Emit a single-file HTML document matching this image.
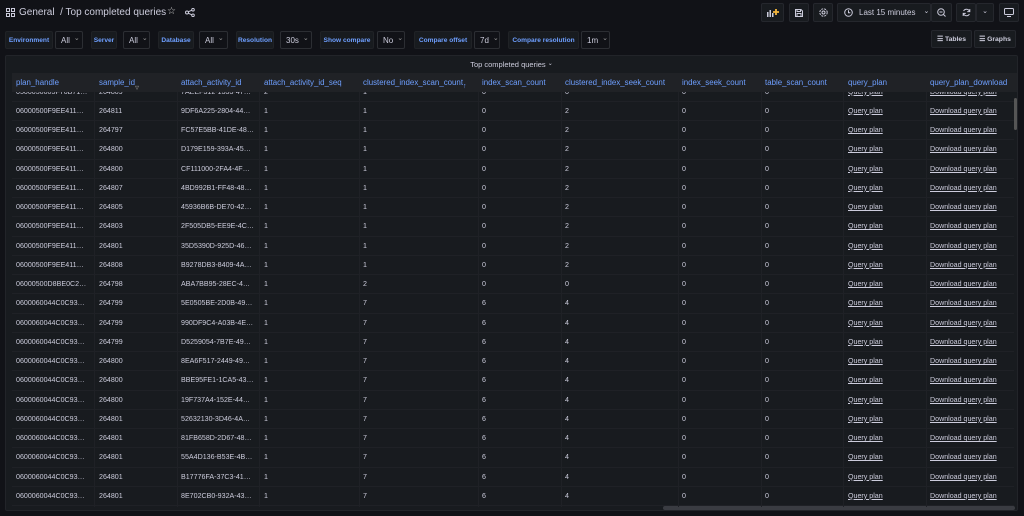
<!DOCTYPE html>
<html><head><meta charset="utf-8"><style>
*{box-sizing:border-box;margin:0;padding:0}
body{width:1024px;height:516px;background:#111217;font-family:"Liberation Sans",sans-serif;color:#ccccdc;position:relative;overflow:hidden;font-size:8px}
.a{position:absolute}
.btn{position:absolute;border:1px solid #25272d;background:#181b1f;border-radius:2px;height:19px;color:#ccccdc;font-size:8px;display:flex;align-items:center;justify-content:center;white-space:nowrap}
.lab{position:absolute;background:#181b1f;border:1px solid #202226;height:18px;color:#6e9fff;font-size:6.6px;font-weight:bold;display:flex;align-items:center;justify-content:center;border-radius:2px;white-space:nowrap}
.val{position:absolute;background:#111217;border:1px solid #2c2e33;height:18px;color:#ccccdc;font-size:8px;display:flex;align-items:center;padding-left:5px;border-radius:2px;white-space:nowrap}
.val:after{content:"⌄";font-size:7px;margin-left:4px;position:relative;top:-2px;color:#999}
.panel{position:absolute;left:5px;top:55px;width:1013px;height:456px;background:#181b1f;border:1px solid #222429;border-radius:2px;overflow:hidden}
.hdr{position:absolute;left:6px;top:17px;width:1005px;height:19px;background:#202226;z-index:2;color:#6e9fff;font-size:7.9px}
.hdr span{position:absolute;top:5px;white-space:nowrap}
.body{position:absolute;left:0;top:36px;width:1011px;height:415px;overflow:hidden}
.r{position:absolute;left:6px;width:1002px;height:19.25px;border-bottom:1px solid #1f2126;font-size:7.1px;color:#ccccdc}
.r span{position:absolute;top:5px;white-space:nowrap}
.r .u{text-decoration:underline;color:#ccccdc}
.vl{position:absolute;top:36px;width:1px;height:415px;background:#1f2126;z-index:3}
</style></head><body>
<div class="a" style="left:6px;top:8px;width:9px;height:9px;line-height:9px">
<svg width="9" height="9" viewBox="0 0 9 9"><g fill="none" stroke="#ccccdc" stroke-width="1"><rect x="0.5" y="0.5" width="3" height="3"/><rect x="5.5" y="0.5" width="3" height="3"/><rect x="0.5" y="5.5" width="3" height="3"/><rect x="5.5" y="5.5" width="3" height="3"/></g></svg></div>
<div class="a" style="left:19px;top:7px;font-size:10px;color:#ccccdc;white-space:nowrap">General&nbsp; / Top completed queries</div>
<div class="a" style="left:167px;top:6px;font-size:10px;color:#ccc">☆</div>
<svg class="a" style="left:185px;top:8px" width="10" height="9" viewBox="0 0 10 9"><g fill="none" stroke="#ccccdc"><circle cx="2" cy="4.5" r="1.5"/><circle cx="8" cy="1.7" r="1.3"/><circle cx="8" cy="7.3" r="1.3"/><path d="M3.3 3.8L6.8 2.2M3.3 5.2L6.8 6.8"/></g></svg>

<div class="btn" style="left:761px;top:3px;width:23px">
<svg width="12" height="9" viewBox="0 0 12 9"><g fill="#ccccdc"><rect x="0" y="4" width="1.5" height="5"/><rect x="2.5" y="2" width="1.5" height="7"/><rect x="5" y="5" width="1.5" height="4"/></g><path d="M9 1v6M6 4h6" stroke="#f5b73d" stroke-width="1.8"/></svg></div>
<div class="btn" style="left:789px;top:3px;width:20px"><svg width="8" height="8" viewBox="0 0 8 8"><path d="M0.5 0.5h5.5l1.5 1.5v5.5h-7z M2 0.5v2h3.5v-2 M2 7.5v-3h4v3" fill="none" stroke="#ccccdc"/></svg></div>
<div class="btn" style="left:813px;top:3px;width:20px"><svg width="9" height="9" viewBox="0 0 9 9"><circle cx="4.5" cy="4.5" r="3.7" fill="none" stroke="#ccccdc" stroke-dasharray="2 1"/><circle cx="4.5" cy="4.5" r="1.5" fill="none" stroke="#ccccdc"/></svg></div>
<div class="btn" style="left:837px;top:3px;width:94px;justify-content:flex-start;padding-left:6px"><svg width="9" height="9" viewBox="0 0 9 9"><circle cx="4.5" cy="4.5" r="3.8" fill="none" stroke="#ccccdc"/><path d="M4.5 2.2v2.5h1.8" fill="none" stroke="#ccccdc"/></svg><span style="margin-left:6px">Last 15 minutes</span><span style="margin-left:8px;font-size:7px;position:relative;top:-2px">⌄</span></div>
<div class="btn" style="left:931px;top:3px;width:21px"><svg width="9" height="9" viewBox="0 0 9 9"><circle cx="4" cy="4" r="3.3" fill="none" stroke="#ccccdc"/><path d="M2.5 4h3M6.5 6.5l2 2" stroke="#ccccdc"/></svg></div>
<div class="btn" style="left:956px;top:3px;width:20px"><svg width="9" height="9" viewBox="0 0 9 9"><path d="M7.5 3.5A3.2 3.2 0 0 0 1.6 3M1.5 5.5A3.2 3.2 0 0 0 7.4 6M7.8 1v2.6h-2.6M1.2 8v-2.6h2.6" fill="none" stroke="#ccccdc"/></svg></div>
<div class="btn" style="left:976px;top:3px;width:18px;font-size:7px"><span style="position:relative;top:-2px">⌄</span></div>
<div class="btn" style="left:999px;top:3px;width:20px"><svg width="10" height="9" viewBox="0 0 10 9"><rect x="0.5" y="0.5" width="9" height="6" rx="1" fill="none" stroke="#ccccdc"/><path d="M3 8.5h4" stroke="#ccccdc"/></svg></div>

<div class="lab" style="left:5px;top:31px;width:48px">Environment</div><div class="val" style="left:55px;top:31px;width:28px">All</div>
<div class="lab" style="left:91px;top:31px;width:26px">Server</div><div class="val" style="left:123px;top:31px;width:27px">All</div>
<div class="lab" style="left:158px;top:31px;width:36px">Database</div><div class="val" style="left:199px;top:31px;width:29px">All</div>
<div class="lab" style="left:236px;top:31px;width:38px">Resolution</div><div class="val" style="left:280px;top:31px;width:32px">30s</div>
<div class="lab" style="left:320px;top:31px;width:54px">Show compare</div><div class="val" style="left:377px;top:31px;width:28px">No</div>
<div class="lab" style="left:414px;top:31px;width:58px">Compare offset</div><div class="val" style="left:474px;top:31px;width:26px">7d</div>
<div class="lab" style="left:508px;top:31px;width:71px">Compare resolution</div><div class="val" style="left:581px;top:31px;width:29px">1m</div>
<div class="btn" style="left:931px;top:30px;width:41px;height:18px;font-size:6.8px;font-weight:bold">☰&nbsp;Tables</div>
<div class="btn" style="left:974px;top:30px;width:42px;height:18px;font-size:6.8px;font-weight:bold">☰&nbsp;Graphs</div>

<div class="panel">
<div class="a" style="left:0;top:4px;width:1011px;text-align:center;font-size:7.5px;color:#ccccdc">Top completed queries <span style="font-size:6px;position:relative;top:-2px">⌄</span></div>
<div class="hdr">
<span style="left:4px">plan_handle</span><span style="left:87px">sample_id <span style="color:#8e8e8e">▿</span></span><span style="left:169px">attach_activity_id</span><span style="left:252px">attach_activity_id_seq</span><span style="left:351px">clustered_index_scan_count <span style="font-size:7px">↑</span></span><span style="left:470px">index_scan_count</span><span style="left:553px">clustered_index_seek_count</span><span style="left:670px">index_seek_count</span><span style="left:753px">table_scan_count</span><span style="left:836px">query_plan</span><span style="left:918px">query_plan_download</span>
</div>
<div class="vl" style="left:88px"></div><div class="vl" style="left:171px"></div><div class="vl" style="left:253px"></div><div class="vl" style="left:353px"></div><div class="vl" style="left:472px"></div><div class="vl" style="left:555px"></div><div class="vl" style="left:672px"></div><div class="vl" style="left:755px"></div><div class="vl" style="left:837px"></div><div class="vl" style="left:920px"></div>
<div class="body" id="b"></div>
<div class="a" style="left:1008px;top:42px;width:3px;height:32px;background:#555;border-radius:2px"></div>
<div class="a" style="left:657px;top:450px;width:352px;height:4px;background:#3a3c42;border-radius:2px"></div>
</div>
<script>
var d=[["0500050005F70B71…","264809","7AEEF312-1333-47…","2","1","0","0"],
["06000500F9EE411…","264811","9DF6A225-2804-44…","1","1","0","2"],
["06000500F9EE411…","264797","FC57E5BB-41DE-48…","1","1","0","2"],
["06000500F9EE411…","264800","D179E159-393A-45…","1","1","0","2"],
["06000500F9EE411…","264800","CF111000-2FA4-4F…","1","1","0","2"],
["06000500F9EE411…","264807","4BD992B1-FF48-48…","1","1","0","2"],
["06000500F9EE411…","264805","45936B6B-DE70-42…","1","1","0","2"],
["06000500F9EE411…","264803","2F505DB5-EE9E-4C…","1","1","0","2"],
["06000500F9EE411…","264801","35D5390D-925D-46…","1","1","0","2"],
["06000500F9EE411…","264808","B9278DB3-8409-4A…","1","1","0","2"],
["06000500D8BE0C2…","264798","ABA7BB95-28EC-4…","1","2","0","0"],
["0600060044C0C93…","264799","5E0505BE-2D0B-49…","1","7","6","4"],
["0600060044C0C93…","264799","990DF9C4-A03B-4E…","1","7","6","4"],
["0600060044C0C93…","264799","D5259054-7B7E-49…","1","7","6","4"],
["0600060044C0C93…","264800","8EA6F517-2449-49…","1","7","6","4"],
["0600060044C0C93…","264800","BBE95FE1-1CA5-43…","1","7","6","4"],
["0600060044C0C93…","264800","19F737A4-152E-44…","1","7","6","4"],
["0600060044C0C93…","264801","52632130-3D46-4A…","1","7","6","4"],
["0600060044C0C93…","264801","81FB658D-2D67-48…","1","7","6","4"],
["0600060044C0C93…","264801","55A4D136-B53E-4B…","1","7","6","4"],
["0600060044C0C93…","264801","B17776FA-37C3-41…","1","7","6","4"],
["0600060044C0C93…","264801","8E702CB0-932A-43…","1","7","6","4"]];
var x=[4,87,169,252,351,470,553,670,753,836,918],h="";
d.forEach(function(r,i){var t=(-9.5+i*19.25);var c=r.concat(["0","0"]);
h+='<div class="r" style="top:'+t+'px">';
for(var j=0;j<9;j++)h+='<span style="left:'+x[j]+'px">'+c[j]+'</span>';
h+='<span class="u" style="left:'+x[9]+'px">Query plan</span><span class="u" style="left:'+x[10]+'px">Download query plan</span></div>';});
document.getElementById("b").innerHTML=h;
</script>
</body></html>
